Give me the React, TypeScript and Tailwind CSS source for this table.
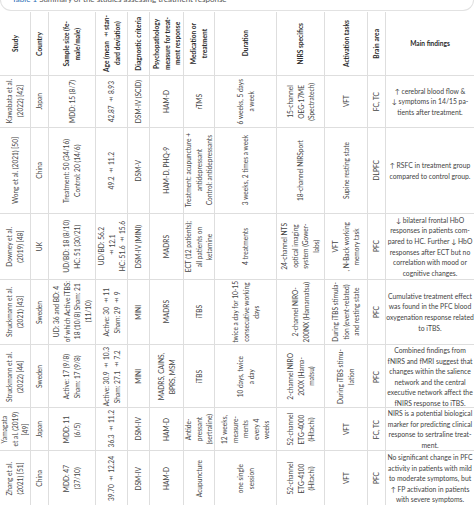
import React from "react";

/* column grid shared by header + body rows */
const COLS = "grid grid-cols-[31px_18px_47px_32px_22px_34px_31px_62px_48px_43px_18px_1fr]";

type Row = { h: string; cells: string[][]; findings: string[] };

const HEAD: string[][] = [
  ["Study"],
  ["Country"],
  ["Sample size (fe-", "male/male)"],
  ["Age (mean ± stan-", "dard deviation)"],
  ["Diagnostic criteria"],
  ["Psychopathology", "measure for treat-", "ment response"],
  ["Medication or", "treatment"],
  ["Duration"],
  ["NIRS specifics"],
  ["Activation tasks"],
  ["Brain area"],
];

const ROWS: Row[] = [
  {
    h: "h-[52px]",
    cells: [
      ["Kawabata et al.", "(2022) [42]"],
      ["Japan"],
      ["MDD: 15 (8/7)"],
      ["42.87 ± 8.93"],
      ["DSM-IV (SCID)"],
      ["HAM-D"],
      ["rTMS"],
      ["6 weeks, 5 days", "a week"],
      ["15-channel", "OEG-17ME", "(Spectratech)"],
      ["VFT"],
      ["FC, TC"],
    ],
    findings: ["↑ cerebral blood flow &", "↓ symptoms in 14/15 pa-", "tients after treatment."],
  },
  {
    h: "h-[86px]",
    cells: [
      ["Wong et al. (2021) [50]"],
      ["China"],
      ["Treatment: 50 (34/16)", "Control: 20 (14/6)"],
      ["49.2 ± 11.2"],
      ["DSM-V"],
      ["HAM-D, PHQ-9"],
      ["Treatment: acupuncture +", "antidepressant", "Control: antidepressants"],
      ["3 weeks, 2 times a week"],
      ["18-channel NIRSport"],
      ["Supine resting state"],
      ["DLPFC"],
    ],
    findings: ["↑ RSFC in treatment group", "compared to control group."],
  },
  {
    h: "h-[66px]",
    cells: [
      ["Downey et al.", "(2019) [48]"],
      ["UK"],
      ["UD/BD: 18 (8/10)", "HC: 51 (30/21)"],
      ["UD/BD: 56.2", "± 12.1", "HC: 51.6 ± 15.6"],
      ["DSM-IV (MINI)"],
      ["MADRS"],
      ["ECT (12 patients);", "all patients on", "ketamine"],
      ["4 treatments"],
      ["24-channel NTS", "optical imaging", "system (Gower-", "labs)"],
      ["VFT", ", N-Back working", "memory task"],
      ["PFC"],
    ],
    findings: [
      "↓ bilateral frontal HbO",
      "responses in patients com-",
      "pared to HC. Further ↓ HbO",
      "responses after ECT but no",
      "correlation with mood or",
      "cognitive changes.",
    ],
  },
  {
    h: "h-[65px]",
    cells: [
      ["Struckmann et al.", "(2021) [43]"],
      ["Sweden"],
      ["UD: 36 and BD: 4", "of which Active iTBS:", "18 (10/8) Sham: 21", "(11/10)"],
      ["Active: 30 ± 11", "Sham: 29 ± 9"],
      ["MINI"],
      ["MADRS"],
      ["iTBS"],
      ["twice a day for 10-15", "consecutive working", "days"],
      ["2-channel NIRO-", "200NX (Hamamatsu)"],
      ["During iTBS stimula-", "tion (event-related)", "and resting state"],
      ["PFC"],
    ],
    findings: [
      "Cumulative treatment effect",
      "was found in the PFC blood",
      "oxygenation response related",
      "to iTBS.",
    ],
  },
  {
    h: "h-[63px]",
    cells: [
      ["Struckmann et al.", "(2022) [44]"],
      ["Sweden"],
      ["Active: 17 (9/8)", "Sham: 17 (9/8)"],
      ["Active: 30.9 ± 10.3", "Sham: 27.1 ± 7.2"],
      ["MINI"],
      ["MADRS, CAINS,", "BPRS, MSM"],
      ["iTBS"],
      ["10 days, twice", "a day"],
      ["2-channel NIRO", "200X (Hama-", "matsu)"],
      ["During iTBS stimu-", "lation"],
      ["PFC"],
    ],
    findings: [
      "Combined findings from",
      "fNIRS and fMRI suggest that",
      "changes within the salience",
      "network and the central",
      "executive network affect the",
      "fNIRS response to iTBS.",
    ],
  },
  {
    h: "h-[43px]",
    cells: [
      ["Yamagata", "et al. (2019)", "[49]"],
      ["Japan"],
      ["MDD: 11", "(6/5)"],
      ["36.3 ± 11.2"],
      ["DSM-IV"],
      ["HAM-D"],
      ["Antide-", "pressant", "(sertraline)"],
      ["12 weeks,", "measure-", "ments", "every 4", "weeks"],
      ["52-channel", "ETG-4000", "(Hitachi)"],
      ["VFT"],
      ["FC, TC"],
    ],
    findings: [
      "NIRS is a potential biological",
      "marker for predicting clinical",
      "response to sertraline treat-",
      "ment.",
    ],
  },
  {
    h: "h-[56px]",
    cells: [
      ["Zhang et al.", "(2021) [51]"],
      ["China"],
      ["MDD: 47", "(37/10)"],
      ["39.70 ± 12.24"],
      ["DSM-IV"],
      ["HAM-D"],
      ["Acupuncture"],
      ["one single", "session"],
      ["52-channel", "ETG-4100", "(Hitachi)"],
      ["VFT"],
      ["PFC"],
    ],
    findings: [
      "No significant change in PFC",
      "activity in patients with mild",
      "to moderate symptoms, but",
      "↑ FP activation in patients",
      "with severe symptoms.",
    ],
  },
];

/* rotated (bottom-to-top) cell */
function VCell({ lines, bold }: { lines: string[]; bold?: boolean }) {
  return (
    <div className="flex h-full items-center justify-center overflow-hidden border-r border-[#dedede]">
      <div
        className={`rotate-180 whitespace-nowrap text-center [writing-mode:vertical-rl] ${
          bold ? "font-bold text-[#2b2b2b]" : "text-[#444]"
        }`}
      >
        {lines.map((l, i) => (
          <div key={i}>{l}</div>
        ))}
      </div>
    </div>
  );
}

export default function App() {
  return (
    <div className="h-[505px] w-[474px] overflow-hidden bg-white text-[6.6px] leading-[10.6px] font-['Lato','Liberation_Sans',sans-serif]">
      {/* caption strip, cut off at top of the shot */}
      <div className="flex h-[11px] items-end overflow-hidden rounded-b-xl border border-t-0 border-[#e2e2e2] px-[11px] pb-[6px]">
        <div className="whitespace-nowrap text-[8px] leading-[9px]">
          <span className="text-[#2a6db5]">Table 1</span>
          <span className="text-[#555]"> Summary of the studies assessing treatment response</span>
        </div>
      </div>

      <div className="mt-[1px]">
        {/* header */}
        <div className={`${COLS} h-[64px] border-b border-[#dedede]`}>
          {HEAD.map((c, i) => (
            <VCell key={i} lines={c} bold />
          ))}
          <div className="flex items-center justify-center font-bold text-[#2b2b2b]">Main findings</div>
        </div>

        {ROWS.map((r, ri) => (
          <div key={ri} className={`${COLS} ${r.h} border-b border-[#dedede]`}>
            {r.cells.map((c, i) => (
              <VCell key={i} lines={c} />
            ))}
            <div className="flex flex-col items-center justify-center whitespace-nowrap text-center text-[6.8px] text-[#444]">
              {r.findings.map((l, i) => (
                <div key={i}>{l}</div>
              ))}
            </div>
          </div>
        ))}
      </div>
    </div>
  );
}
